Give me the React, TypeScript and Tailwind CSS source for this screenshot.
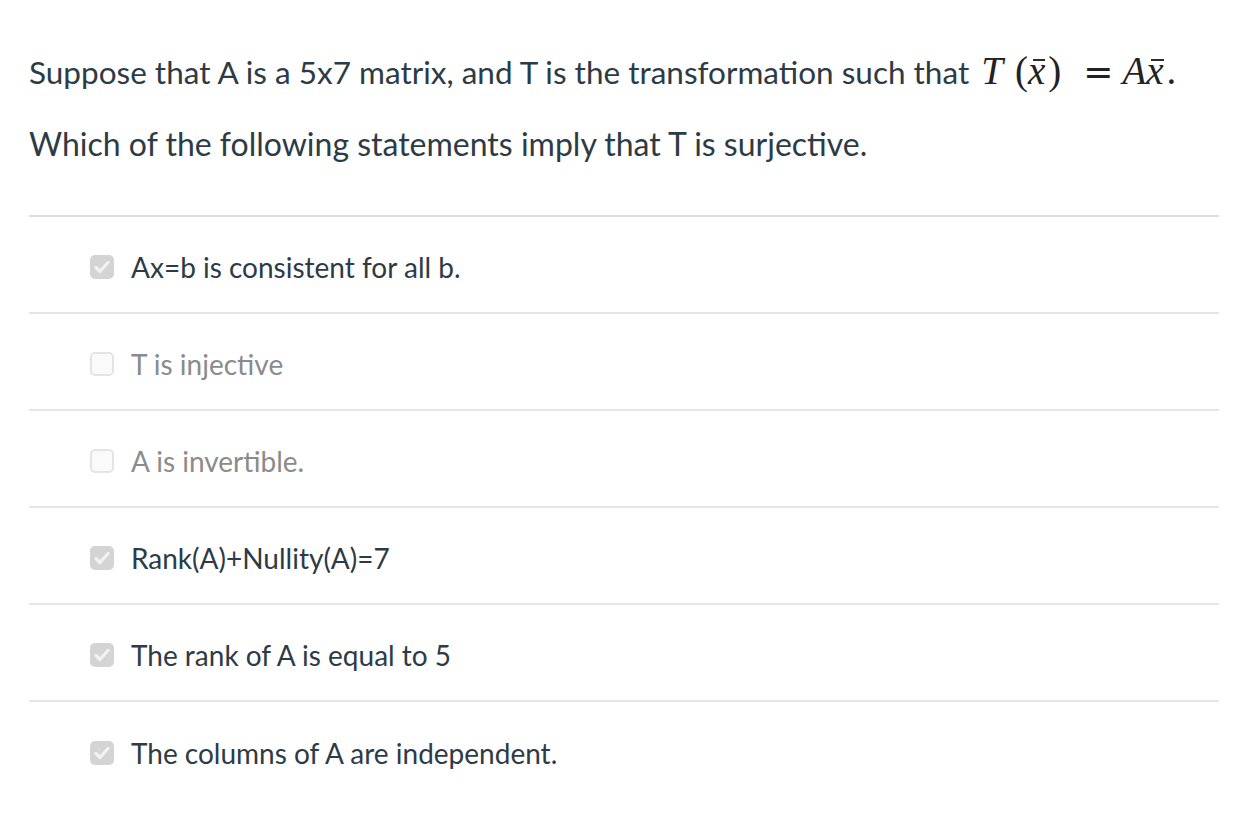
const options = [
  { label: "Ax=b is consistent for all b.", checked: true },
  { label: "T is injective", checked: false },
  { label: "A is invertible.", checked: false },
  { label: "Rank(A)+Nullity(A)=7", checked: true },
  { label: "The rank of A is equal to 5", checked: true },
  { label: "The columns of A are independent.", checked: true },
]

function Checkbox({ checked }: { checked: boolean }) {
  if (!checked) {
    return <div className="w-[24px] h-[24px] rounded-[5px] border-2 border-[#e4e4e4] bg-[#fafafa] shrink-0" />
  }
  return (
    <div className="w-[24px] h-[24px] rounded-[5px] bg-[#d4d4d4] shrink-0 flex items-center justify-center">
      <svg width="16" height="14" viewBox="0 0 16 14">
        <path d="M2 7.5 L6 11.5 L14 2.5" fill="none" stroke="#f2f2f2" strokeWidth="3.2" strokeLinecap="round" strokeLinejoin="round" />
      </svg>
    </div>
  )
}

function Xbar() {
  return (
    <span className="relative inline-block" style={{ fontStyle: "italic" }}>
      x
      <span className="absolute left-[5px] right-[0px] top-[10px] h-[2px] bg-[#2d2d2d]" />
    </span>
  )
}

export default function App() {
  return (
    <div className="min-h-screen bg-white text-[#2d3b45]" style={{ fontFamily: "Lato, 'Open Sans', sans-serif" }}>
      <div className="pl-[29px] pr-[31px] pt-[49px]">
        <p className="text-[31.5px] leading-[44px] flex items-baseline whitespace-nowrap">
          <span>Suppose that A is a 5x7 matrix, and T is the transformation such that</span>
          <span className="ml-[12px] text-[39px] text-[#222]" style={{ fontFamily: "'Liberation Serif', serif" }}>
            <span style={{ fontStyle: "italic" }}>T</span>
            <span className="ml-[12px]">(</span>
            <Xbar />
            <span className="ml-[3px]">)</span>
            <span className="ml-[22px] mr-[9px] text-[36px]" style={{ fontFamily: "'DejaVu Sans', sans-serif" }}>=</span>
            <span style={{ fontStyle: "italic" }}>A</span>
            <Xbar />
            <span className="ml-[3px]">.</span>
          </span>
        </p>
        <p className="text-[32px] leading-[44px] mt-[28px]">Which of the following statements imply that T is surjective.</p>

        <div className="mt-[49px] border-t-2 border-[#dddddd]">
          {options.map((o, i) => (
            <div
              key={o.label}
              className={"h-[97px] flex items-center pl-[61px] pt-[4px] " + (i < options.length - 1 ? "border-b-2 border-[#e6e6e6]" : "")}
            >
              <Checkbox checked={o.checked} />
              <span className={"ml-[17px] text-[28px] " + (o.checked ? "text-[#2d3b45]" : "text-[#8b8b8b]")}>
                {o.label}
              </span>
            </div>
          ))}
        </div>
      </div>
    </div>
  )
}
